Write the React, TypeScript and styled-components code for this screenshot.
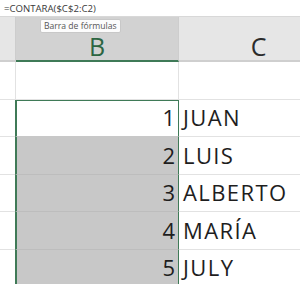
import React from 'react';
import styled, { createGlobalStyle } from 'styled-components';

const GlobalStyle = createGlobalStyle`
  html, body {
    margin: 0;
    padding: 0;
    background: #ffffff;
    overflow: hidden;
  }
  * {
    box-sizing: border-box;
  }
`;

const COLS = '16px 163px 160px';
const GREEN = '#3f7a57';

const rows = [
  { num: 1, name: 'JUAN' },
  { num: 2, name: 'LUIS' },
  { num: 3, name: 'ALBERTO' },
  { num: 4, name: 'MARÍA' },
  { num: 5, name: 'JULY' },
];

export default function App() {
  return (
    <>
      <GlobalStyle />
      <Sheet>
        <FormulaBar>=CONTARA($C$2:C2)</FormulaBar>
        <Tooltip>Barra de fórmulas</Tooltip>

        <HeaderRow>
          <HeaderCell />
          <HeaderCell $selected>B</HeaderCell>
          <HeaderCell>C</HeaderCell>
        </HeaderRow>

        <Row>
          <Cell />
          <Cell />
          <Cell />
        </Row>

        {rows.map((r, i) => (
          <Row key={r.num}>
            <Cell />
            <NumCell $active={i === 0} $first={i === 0}>
              {r.num}
            </NumCell>
            <Cell>{r.name}</Cell>
          </Row>
        ))}
      </Sheet>
    </>
  );
}

/* ─── STYLED COMPONENTS ─── */
const Sheet = styled.div`
  position: relative;
  width: 300px;
  height: 284px;
  overflow: hidden;
  background: #ffffff;
`;

const FormulaBar = styled.div`
  height: 17px;
  padding: 3px 0 0 4px;
  font-family: 'Open Sans', 'Liberation Sans', sans-serif;
  font-size: 9.6px;
  line-height: 11px;
  color: #3a3a3a;
  background: #ffffff;
  border-bottom: 1px solid #d8d8d8;
  white-space: nowrap;
`;

const Tooltip = styled.div`
  position: absolute;
  left: 40px;
  top: 19px;
  z-index: 5;
  padding: 1px 3px 1px;
  font-family: 'Open Sans', 'Liberation Sans', sans-serif;
  font-size: 8.6px;
  line-height: 10px;
  color: #555555;
  background: rgba(255, 255, 255, 0.92);
  border: 1px solid #c8c8c8;
  border-radius: 2px;
  white-space: nowrap;
`;

const HeaderRow = styled.div`
  display: grid;
  grid-template-columns: ${COLS};
  height: 45px;
  background: #e6e6e6;
`;

const HeaderCell = styled.div<{ $selected?: boolean }>`
  display: flex;
  align-items: center;
  justify-content: center;
  padding-top: 14px;
  font-family: 'Open Sans', 'Liberation Sans', sans-serif;
  font-size: 25px;
  line-height: 20px;
  color: ${(p) => (p.$selected ? '#2c6541' : '#2b2b2b')};
  background: ${(p) => (p.$selected ? '#d2d2d2' : '#e6e6e6')};
  border-right: 1px solid #cdcdcd;
  border-bottom: ${(p) => (p.$selected ? `2px solid ${GREEN}` : '2px solid #cfcfcf')};
`;

const Row = styled.div`
  display: grid;
  grid-template-columns: ${COLS};
  height: 37.5px;
`;

const Cell = styled.div`
  display: flex;
  align-items: flex-end;
  padding: 0 0 7px 4px;
  font-family: 'Open Sans', 'Liberation Sans', sans-serif;
  font-size: 22px;
  line-height: 24px;
  letter-spacing: 1.4px;
  color: #1e1e1e;
  background: #ffffff;
  border-right: 1px solid #e2e2e2;
  border-bottom: 1px solid #e2e2e2;
  white-space: nowrap;
`;

const NumCell = styled(Cell)<{ $active?: boolean; $first?: boolean }>`
  justify-content: flex-end;
  padding: 0 3px 7px 0;
  letter-spacing: 0;
  background: ${(p) => (p.$active ? '#ffffff' : '#c8c8c8')};
  border-left: 2px solid ${GREEN};
  border-right: 1px solid ${GREEN};
  border-top: ${(p) => (p.$first ? `1px solid ${GREEN}` : 'none')};
  border-bottom: 1px solid ${(p) => (p.$active ? '#c8c8c8' : '#bdbdbd')};
  margin-left: -1px;
`;
